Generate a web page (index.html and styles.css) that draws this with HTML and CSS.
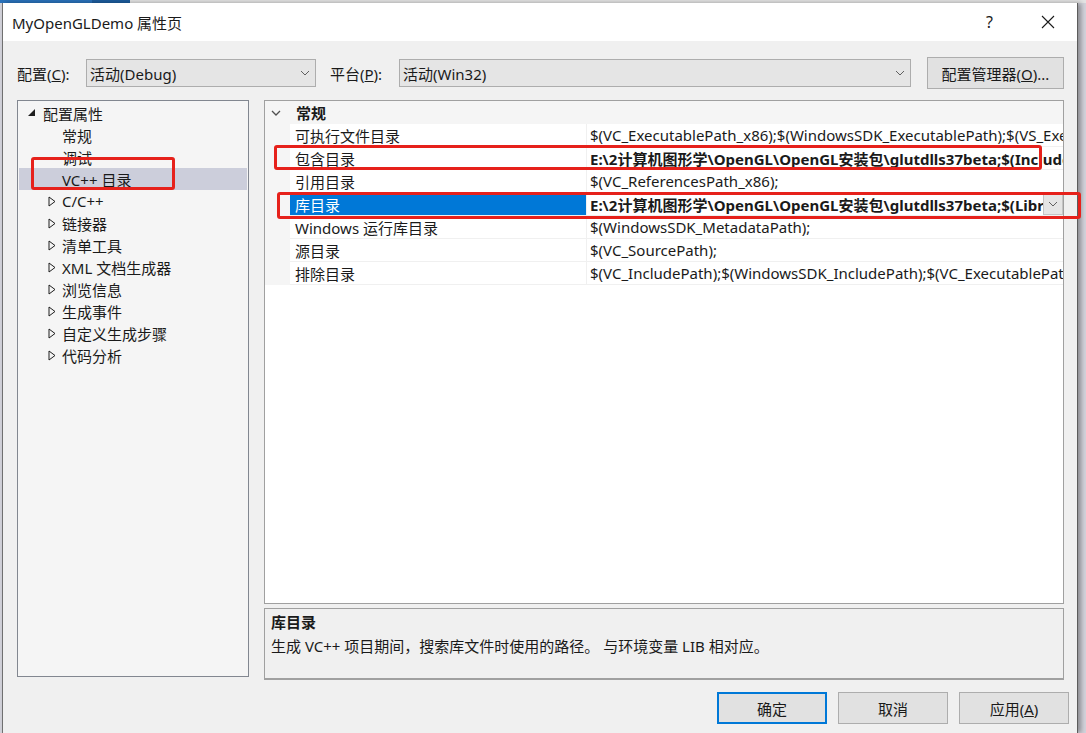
FILE: index.html
```html
<!DOCTYPE html>
<html lang="zh-CN">
<head>
    <meta charset="UTF-8">
    <meta name="viewport" content="width=device-width, initial-scale=1.0">
    <title>MyOpenGLDemo 属性页</title>
    <link rel="stylesheet" href="styles.css">
</head>
<body>
    <div class="screen">
        <div class="top-strip"></div>

        <div class="dialog">
            <div class="title-bar">
                <span class="title">MyOpenGLDemo 属性页</span>
                <span class="help">?</span>
                <svg class="close" width="14" height="14" viewBox="0 0 14 14">
                    <path d="M1 1 L13 13 M13 1 L1 13" stroke="#1a1a1a" stroke-width="1.1" fill="none"/>
                </svg>
            </div>

            <div class="dialog-body">
                <div class="config-row">
                    <span class="config-label">配置(<u>C</u>):</span>
                    <div class="combo combo-config">
                        <span>活动(Debug)</span>
                        <svg class="chevron" width="10" height="6" viewBox="0 0 10 6"><path d="M1 1 L5 5 L9 1" stroke="#606060" fill="none"/></svg>
                    </div>
                    <span class="config-label platform-label">平台(<u>P</u>):</span>
                    <div class="combo combo-platform">
                        <span>活动(Win32)</span>
                        <svg class="chevron" width="10" height="6" viewBox="0 0 10 6"><path d="M1 1 L5 5 L9 1" stroke="#606060" fill="none"/></svg>
                    </div>
                    <button class="btn btn-manager">配置管理器(<u>O</u>)...</button>
                </div>

                <div class="main">
                    <ul class="tree">
                        <li class="tree-item root">
                            <svg class="twisty" width="8" height="8" viewBox="0 0 8 8"><polygon points="7,0 7,7 0,7" fill="#1e1e1e"/></svg>
                            配置属性
                        </li>
                        <li class="tree-item child">常规</li>
                        <li class="tree-item child">调试</li>
                        <li class="tree-item child selected">VC++ 目录</li>
                        <li class="tree-item branch"><svg class="twisty" width="8" height="11" viewBox="0 0 8 11"><polygon points="1,1 7,5.5 1,10" fill="none" stroke="#1e1e1e"/></svg>C/C++</li>
                        <li class="tree-item branch"><svg class="twisty" width="8" height="11" viewBox="0 0 8 11"><polygon points="1,1 7,5.5 1,10" fill="none" stroke="#1e1e1e"/></svg>链接器</li>
                        <li class="tree-item branch"><svg class="twisty" width="8" height="11" viewBox="0 0 8 11"><polygon points="1,1 7,5.5 1,10" fill="none" stroke="#1e1e1e"/></svg>清单工具</li>
                        <li class="tree-item branch"><svg class="twisty" width="8" height="11" viewBox="0 0 8 11"><polygon points="1,1 7,5.5 1,10" fill="none" stroke="#1e1e1e"/></svg>XML 文档生成器</li>
                        <li class="tree-item branch"><svg class="twisty" width="8" height="11" viewBox="0 0 8 11"><polygon points="1,1 7,5.5 1,10" fill="none" stroke="#1e1e1e"/></svg>浏览信息</li>
                        <li class="tree-item branch"><svg class="twisty" width="8" height="11" viewBox="0 0 8 11"><polygon points="1,1 7,5.5 1,10" fill="none" stroke="#1e1e1e"/></svg>生成事件</li>
                        <li class="tree-item branch"><svg class="twisty" width="8" height="11" viewBox="0 0 8 11"><polygon points="1,1 7,5.5 1,10" fill="none" stroke="#1e1e1e"/></svg>自定义生成步骤</li>
                        <li class="tree-item branch"><svg class="twisty" width="8" height="11" viewBox="0 0 8 11"><polygon points="1,1 7,5.5 1,10" fill="none" stroke="#1e1e1e"/></svg>代码分析</li>
                    </ul>

                    <div class="right-pane">
                        <div class="grid">
                            <div class="grid-category">
                                <svg class="cat-chevron" width="10" height="6" viewBox="0 0 10 6"><path d="M1 1 L5 5 L9 1" stroke="#505050" stroke-width="1.3" fill="none"/></svg>
                                <span>常规</span>
                            </div>
                            <div class="prop-row">
                                <div class="gutter"></div>
                                <div class="prop-name">可执行文件目录</div>
                                <div class="prop-value"><span class="value-text">$(VC_ExecutablePath_x86);$(WindowsSDK_ExecutablePath);$(VS_ExecutablePath);$(MSBuild_ExecutablePath);$(SystemRoot)\SysWow64;$(FxCopDir);$(PATH);</span></div>
                            </div>
                            <div class="prop-row">
                                <div class="gutter"></div>
                                <div class="prop-name">包含目录</div>
                                <div class="prop-value bold"><span class="value-text">E:\2计算机图形学\OpenGL\OpenGL安装包\glutdlls37beta;$(IncludePath)</span></div>
                            </div>
                            <div class="prop-row">
                                <div class="gutter"></div>
                                <div class="prop-name">引用目录</div>
                                <div class="prop-value">$(VC_ReferencesPath_x86);</div>
                            </div>
                            <div class="prop-row active">
                                <div class="gutter"></div>
                                <div class="prop-name">库目录</div>
                                <div class="prop-value bold">
                                    <span class="value-text">E:\2计算机图形学\OpenGL\OpenGL安装包\glutdlls37beta;$(LibraryPath)</span>
                                    <span class="drop-btn">
                                        <svg width="10" height="6" viewBox="0 0 10 6"><path d="M1 1 L5 5 L9 1" stroke="#606060" fill="none"/></svg>
                                    </span>
                                </div>
                            </div>
                            <div class="prop-row">
                                <div class="gutter"></div>
                                <div class="prop-name">Windows 运行库目录</div>
                                <div class="prop-value">$(WindowsSDK_MetadataPath);</div>
                            </div>
                            <div class="prop-row">
                                <div class="gutter"></div>
                                <div class="prop-name">源目录</div>
                                <div class="prop-value">$(VC_SourcePath);</div>
                            </div>
                            <div class="prop-row">
                                <div class="gutter"></div>
                                <div class="prop-name">排除目录</div>
                                <div class="prop-value"><span class="value-text">$(VC_IncludePath);$(WindowsSDK_IncludePath);$(VC_ExecutablePath_x86);$(VC_LibraryPath_x86)</span></div>
                            </div>
                        </div>

                        <div class="desc">
                            <div class="desc-title">库目录</div>
                            <div class="desc-text">生成 VC++ 项目期间，搜索库文件时使用的路径。 与环境变量 LIB 相对应。</div>
                        </div>
                    </div>
                </div>

                <div class="footer">
                    <button class="btn btn-default">确定</button>
                    <button class="btn">取消</button>
                    <button class="btn">应用(<u>A</u>)</button>
                </div>
            </div>
        </div>

        <!-- red annotation boxes drawn over the screenshot -->
        <div class="mark mark-tree"></div>
        <div class="mark mark-include"></div>
        <div class="mark mark-lib"></div>
    </div>
</body>
</html>
```

FILE: styles.css
```css
* {
    margin: 0;
    padding: 0;
    box-sizing: border-box;
}

body {
    background: #d3d3db;
    font-family: "Noto Sans", "Noto Sans CJK SC", sans-serif;
    font-size: 15px;
    color: #1a1a1a;
    overflow: hidden;
}

.screen {
    position: relative;
    width: 1086px;
    height: 733px;
}

.top-strip {
    height: 3px;
    background: linear-gradient(90deg, #2a72bb 0, #2a72bb 92px, #1d5d9e 92px, #1d5d9e 130px, #e4e4e4 130px);
}

.dialog {
    margin-left: 2px;
    width: 1076px;
    height: 730px;
    background: #f0f0f0;
    border-left: 1px solid #707070;
    border-right: 1px solid #5c5c5c;
    box-shadow: 3px 0 5px rgba(0,0,0,0.35);
}

/* title bar */
.title-bar {
    height: 38px;
    background: #fff;
    display: flex;
    align-items: center;
    padding-left: 9px;
    padding-right: 22px;
}

.title {
    flex: 1;
    font-size: 15px;
}

.help {
    font-size: 16px;
    margin-right: 48px;
}

.close {
    display: block;
}

/* configuration row */
.dialog-body {
    padding: 16px 8px 0 14px;
}

.config-row {
    display: flex;
    align-items: center;
    height: 32px;
}

.config-label {
    width: 69px;
}

.platform-label {
    margin-left: 14px;
}

.combo {
    height: 28px;
    background: #e5e5e5;
    border: 1px solid #adadad;
    display: flex;
    align-items: center;
    justify-content: space-between;
    padding: 0 5px 0 3px;
}

.combo-config {
    width: 230px;
}

.combo-platform {
    width: 512px;
}

.btn {
    font-family: inherit;
    font-size: 15px;
    color: #1a1a1a;
    background: #e1e1e1;
    border: 1px solid #adadad;
    height: 32px;
    width: 110px;
}

.btn-manager {
    margin-left: 16px;
    width: 137px;
}

.btn-default {
    border: 2px solid #0078d7;
}

/* main area */
.main {
    display: flex;
    align-items: flex-start;
    gap: 15px;
    margin-top: 11px;
}

.tree {
    list-style: none;
    width: 232px;
    height: 577px;
    background: #f5f5f5;
    border: 1px solid #828790;
    padding-top: 1px;
}

.tree-item {
    height: 22px;
    display: flex;
    align-items: center;
    white-space: nowrap;
}

.tree-item.root {
    padding-left: 10px;
}

.tree-item.root .twisty {
    margin-right: 7px;
}

.tree-item.child {
    padding-left: 44px;
}

.tree-item.branch {
    padding-left: 30px;
}

.tree-item.branch .twisty {
    margin-right: 6px;
}

.tree-item.selected {
    background: #cccedb;
    margin: 0 1px;
    padding-left: 43px;
}

.right-pane {
    width: 800px;
    display: flex;
    flex-direction: column;
    gap: 4px;
}

/* property grid */
.grid {
    height: 504px;
    background: #fff;
    border: 1px solid #a0a0a0;
}

.grid-category {
    height: 23px;
    background: #f5f5f5;
    display: flex;
    align-items: center;
    font-weight: bold;
}

.cat-chevron {
    margin: 0 15px 0 6px;
}

.prop-row {
    display: grid;
    grid-template-columns: 25px 297px 1fr;
    height: 23px;
}

.gutter {
    background: #f5f5f5;
}

.prop-name,
.prop-value {
    display: flex;
    align-items: center;
    white-space: nowrap;
    overflow: hidden;
    border-bottom: 1px solid #f0f0f0;
}

.prop-name {
    padding-left: 5px;
    border-right: 1px solid #f0f0f0;
}

.prop-value {
    padding-left: 3px;
}

.prop-value.bold {
    font-weight: bold;
}

.prop-row.active .prop-name {
    background: #0078d7;
    color: #fff;
}

.prop-row.active .prop-value {
    justify-content: space-between;
}

.value-text {
    overflow: hidden;
    min-width: 0;
}

.drop-btn {
    flex: none;
    width: 20px;
    height: 21px;
    background: #e5e5e5;
    border: 1px solid #c4c4c4;
    display: flex;
    align-items: center;
    justify-content: center;
}

/* description */
.desc {
    height: 72px;
    border: 1px solid #a0a0a0;
    border-bottom-width: 2px;
    background: #f0f0f0;
    padding: 2px 6px;
}

.desc-title {
    font-weight: bold;
    line-height: 22px;
}

.desc-text {
    line-height: 26px;
}

/* footer buttons */
.footer {
    display: flex;
    justify-content: flex-end;
    gap: 11px;
    margin-top: 12px;
}

/* annotation boxes */
.mark {
    position: absolute;
    border: 3px solid #e6211b;
    border-radius: 3px;
}

.mark-tree {
    left: 31px;
    top: 157px;
    width: 144px;
    height: 33px;
}

.mark-include {
    left: 274px;
    top: 145px;
    width: 768px;
    height: 25px;
}

.mark-lib {
    left: 277px;
    top: 192px;
    width: 804px;
    height: 27px;
}
```
